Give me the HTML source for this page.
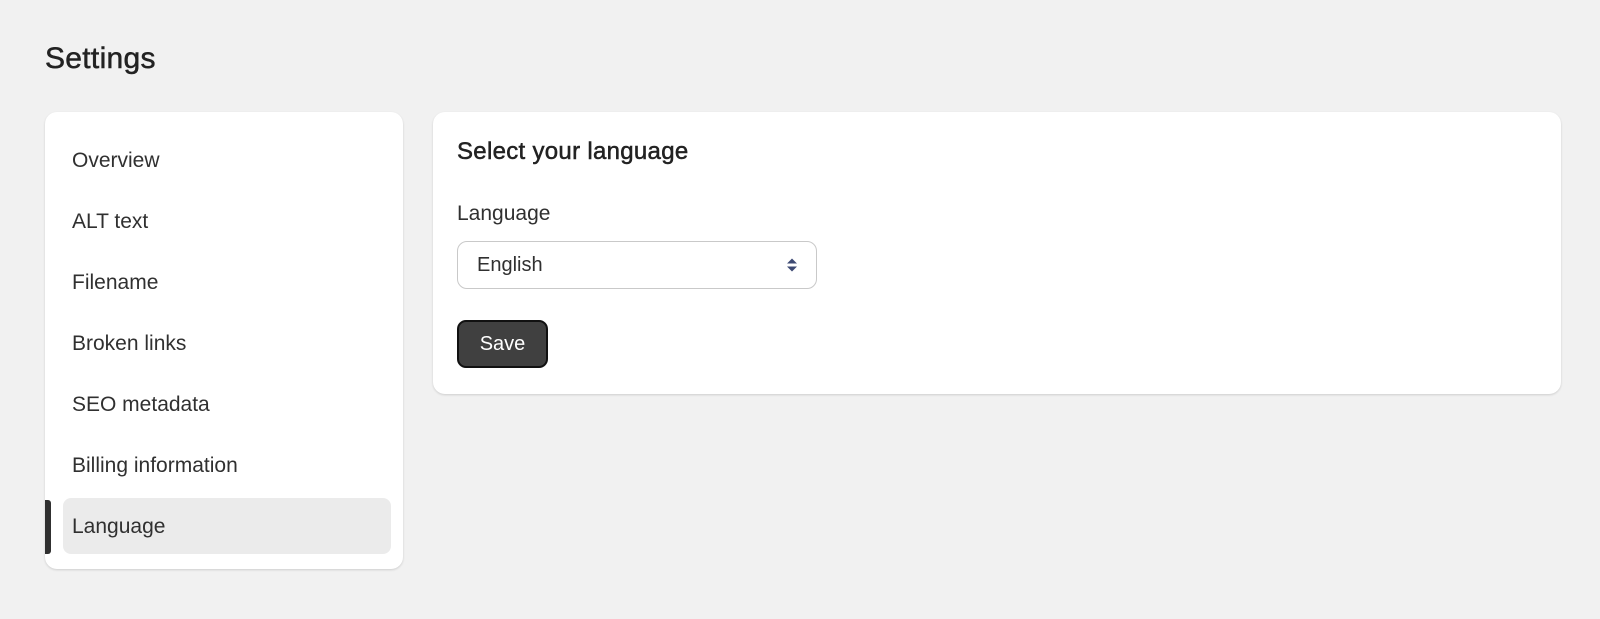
<!DOCTYPE html>
<html><head><style>
*{box-sizing:border-box;margin:0;padding:0}
body{width:1600px;height:619px;background:#f1f1f1;font-family:"Liberation Sans",sans-serif;color:#303030;position:relative;overflow:hidden}
h1{position:absolute;left:45px;top:42px;font-size:30px;font-weight:normal;color:#222;-webkit-text-stroke:0.5px #222;letter-spacing:0.3px}
.side{position:absolute;left:45px;top:112px;width:358px;height:457px;background:#fff;border-radius:12px;box-shadow:0 1px 2px rgba(0,0,0,.15)}
.item{position:absolute;left:27px;font-size:21px;color:#303030}
.active{position:absolute;left:18px;top:386px;width:328px;height:56px;background:#ebebeb;border-radius:8px}
.bar{position:absolute;left:0;top:388px;width:6px;height:54px;background:#303030;border-radius:0 3px 3px 0}
.main{position:absolute;left:433px;top:112px;width:1128px;height:282px;background:#fff;border-radius:12px;box-shadow:0 1px 2px rgba(0,0,0,.15)}
.sel{position:absolute;left:24px;top:129px;width:360px;height:48px;border:1px solid #c9c9c9;border-radius:10px;font-size:20px;padding:12px 0 0 19px}
.btn{position:absolute;left:24px;top:208px;width:91px;height:48px;background:#404040;border:2px solid #111;border-radius:9px;color:#fff;font-size:20px;text-align:center;line-height:44px}
</style></head><body>
<h1>Settings</h1>
<div class="side">
<div class="active"></div><div class="bar"></div>
<div class="item" style="top:37px">Overview</div>
<div class="item" style="top:98px">ALT text</div>
<div class="item" style="top:159px">Filename</div>
<div class="item" style="top:220px">Broken links</div>
<div class="item" style="top:281px">SEO metadata</div>
<div class="item" style="top:342px">Billing information</div>
<div class="item" style="top:403px">Language</div>
</div>
<div class="main">
<div style="position:absolute;left:24px;top:26px;font-size:24px;color:#222;-webkit-text-stroke:0.5px #222;letter-spacing:0.3px">Select your language</div>
<div style="position:absolute;left:24px;top:90px;font-size:21px">Language</div>
<div class="sel">English
<svg style="position:absolute;right:18px;top:15px" width="12" height="16" viewBox="0 0 12 16"><path d="M1 6.5L6 1.5L11 6.5Z M1 9.5L6 14.5L11 9.5Z" fill="#3d4a73"/></svg></div>
<div class="btn">Save</div>
</div>
</body></html>
